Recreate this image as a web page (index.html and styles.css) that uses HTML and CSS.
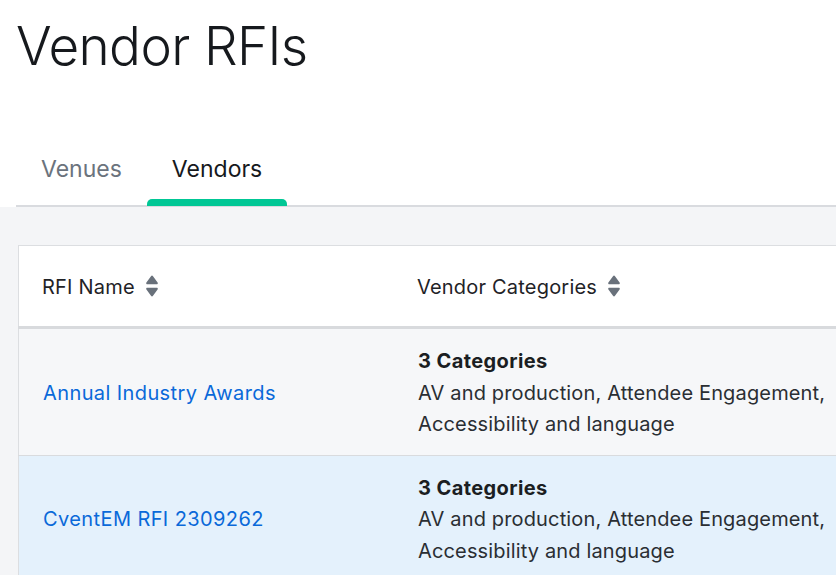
FILE: index.html
```html
<!DOCTYPE html>
<html lang="en">
<head>
<meta charset="utf-8">
<title>Vendor RFIs</title>
<link rel="stylesheet" href="styles.css">
</head>
<body>
<header class="page-header">
  <h1 class="page-title">Vendor RFIs</h1>
  <nav class="tabs">
    <a class="tab">Venues</a>
    <a class="tab tab-active">Vendors</a>
  </nav>
</header>
<main class="content">
  <table class="rfi-table">
    <thead>
      <tr>
        <th class="col-name"><span class="th-label">RFI Name</span><svg class="sort" viewBox="0 0 14 22" width="14" height="22"><path d="M6 1.2a1.2 1.2 0 0 1 2 0l4.6 6.4c.5.7 0 1.6-.8 1.6H2.2c-.8 0-1.3-.9-.8-1.6z" fill="#69717b"/><path d="M6 20.8a1.2 1.2 0 0 0 2 0l4.6-6.4c.5-.7 0-1.6-.8-1.6H2.2c-.8 0-1.3.9-.8 1.6z" fill="#69717b"/></svg></th>
        <th class="col-cat"><span class="th-label">Vendor Categories</span><svg class="sort" viewBox="0 0 14 22" width="14" height="22"><path d="M6 1.2a1.2 1.2 0 0 1 2 0l4.6 6.4c.5.7 0 1.6-.8 1.6H2.2c-.8 0-1.3-.9-.8-1.6z" fill="#69717b"/><path d="M6 20.8a1.2 1.2 0 0 0 2 0l4.6-6.4c.5-.7 0-1.6-.8-1.6H2.2c-.8 0-1.3.9-.8 1.6z" fill="#69717b"/></svg></th>
        <th class="col-rest"></th>
      </tr>
    </thead>
    <tbody>
      <tr class="row">
        <td><a class="rfi-link">Annual Industry Awards</a></td>
        <td><div class="cat-count">3 Categories</div><div class="cat-list">AV and production, Attendee Engagement, Accessibility and language</div></td>
        <td></td>
      </tr>
      <tr class="row row-hover">
        <td><a class="rfi-link">CventEM RFI 2309262</a></td>
        <td><div class="cat-count">3 Categories</div><div class="cat-list">AV and production, Attendee Engagement, Accessibility and language</div></td>
        <td></td>
      </tr>
    </tbody>
  </table>
</main>
</body>
</html>
```
FILE: styles.css
```css
html, body {
  margin: 0;
  padding: 0;
  overflow: hidden;
  background: #ffffff;
  font-family: Inter, "Open Sans", "Liberation Sans", sans-serif;
  color: #1b1e22;
}
.page-header {
  background: #ffffff;
  padding: 0 0 0 16px;
}
.page-title {
  margin: 0;
  padding: 13px 0 0 0;
  font-size: 53px;
  font-weight: 300;
  line-height: 66px;
  letter-spacing: -0.6px;
  color: #16191d;
}
.tabs {
  display: flex;
  margin-top: 72px;
  border-bottom: 2px solid #d9dbdf;
  height: 54px;
  box-sizing: content-box;
}
.tab {
  position: relative;
  display: block;
  padding: 0 25px;
  font-size: 23px;
  line-height: 30px;
  padding-top: 3px;
  color: #6b737d;
}
.tab-active {
  color: #16191d;
}
.tab-active::after {
  content: "";
  position: absolute;
  left: 0;
  right: 0;
  bottom: -1px;
  height: 7px;
  background: #00c795;
  border-radius: 5px 5px 0 0;
}
.content {
  background: #f4f5f7;
  padding: 38px 0 0 18px;
  height: 400px;
}
.rfi-table {
  border-collapse: collapse;
  width: 1100px;
  background: #ffffff;
  font-size: 20px;
  letter-spacing: 0.4px;
  border: 1px solid #dcdee1;
}
.rfi-table th {
  text-align: left;
  font-weight: 400;
  height: 80px;
  padding: 0 24px 0 23px;
  color: #1f2327;
  border-bottom: 3px solid #d8dadd;
  white-space: nowrap;
  letter-spacing: 0.2px;
}
.th-label {
  vertical-align: middle;
}
.sort {
  vertical-align: middle;
  margin-left: 10px;
  position: relative;
  top: -1px;
}
.col-name {
  width: 328px;
}
.col-cat {
  width: 440px;
}
.row td {
  background: #f6f7f9;
  padding: 17px 24px 14px 24px;
  vertical-align: middle;
  border-bottom: 1px solid #d9dbde;
  line-height: 31.5px;
}
.row-hover td {
  background: #e4f1fc;
}
.rfi-link {
  color: #0a69d9;
}
.cat-count {
  font-weight: 700;
  color: #1b1e22;
}
.cat-list {
  color: #2a2e33;
  letter-spacing: 0.15px;
}
```
